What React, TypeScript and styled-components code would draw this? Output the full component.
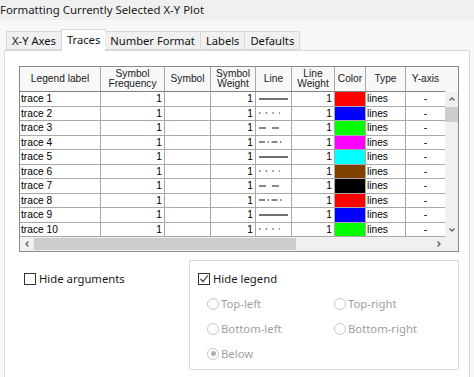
import * as React from 'react';
import styled, { createGlobalStyle } from 'styled-components';

const GlobalStyle = createGlobalStyle`
  html, body {
    margin: 0;
    padding: 0;
    background: #f0f0f0;
  }
  body {
    font-family: "Noto Sans", "Noto Sans CJK SC", sans-serif;
  }
`;

type LineKind = 'solid' | 'dot' | 'dash' | 'dashdot';

interface Trace {
  label: string;
  line: LineKind;
  color: string;
}

const traces: Trace[] = [
  { label: 'trace 1', line: 'solid', color: '#ff0000' },
  { label: 'trace 2', line: 'dot', color: '#0000ff' },
  { label: 'trace 3', line: 'dash', color: '#00ff00' },
  { label: 'trace 4', line: 'dashdot', color: '#ff00ff' },
  { label: 'trace 5', line: 'solid', color: '#00ffff' },
  { label: 'trace 6', line: 'dot', color: '#804000' },
  { label: 'trace 7', line: 'dash', color: '#000000' },
  { label: 'trace 8', line: 'dashdot', color: '#ff0000' },
  { label: 'trace 9', line: 'solid', color: '#0000ff' },
  { label: 'trace 10', line: 'dot', color: '#00ff00' }
];

const columns = '81px 64px 46px 45px 36px 43px 31px 40px 39px';

const tabs = ['X-Y Axes', 'Traces', 'Number Format', 'Labels', 'Defaults'];

// dash patterns roughly as the old Windows pen styles look at 1px
const dashes: Record<LineKind, string | undefined> = {
  solid: undefined,
  dot: '1.4 5.3',
  dash: '7 6',
  dashdot: '6 2.5 1.5 2.5'
};

const lineEnd: Record<LineKind, number> = {
  solid: 31,
  dot: 23,
  dash: 23,
  dashdot: 26
};

const LineSample = ({ kind }: { kind: LineKind }) => (
  <svg width="31" height="6" viewBox="0 0 31 6">
    <line
      x1="2"
      y1="3"
      x2={lineEnd[kind]}
      y2="3"
      stroke="#111"
      strokeWidth="1.2"
      strokeDasharray={dashes[kind]}
    />
  </svg>
);

const Chevron = ({ dir }: { dir: 'up' | 'down' | 'left' | 'right' }) => {
  const rot = { up: 0, right: 90, down: 180, left: 270 }[dir];
  return (
    <svg width="8" height="8" viewBox="0 0 8 8" style={{ transform: `rotate(${rot}deg)` }}>
      <polyline points="1.5,5.5 4,3 6.5,5.5" fill="none" stroke="#606060" strokeWidth="1.3" />
    </svg>
  );
};

const Check = () => (
  <svg width="10" height="10" viewBox="0 0 10 10">
    <polyline points="1.5,5 4,7.5 8.8,1.5" fill="none" stroke="#333" strokeWidth="1.2" />
  </svg>
);

export default function App() {
  return (
    <Window>
      <GlobalStyle />
      <Title>Formatting Currently Selected X-Y Plot</Title>
      <Body>
        <TabStrip>
          {tabs.map(t => (
            <Tab key={t} active={t === 'Traces'}>
              {t}
            </Tab>
          ))}
        </TabStrip>
        <Panel>
          <GridFrame>
            <HeaderRow>
              <HeadCell>Legend label</HeadCell>
              <HeadCell>
                Symbol
                <br />
                Frequency
              </HeadCell>
              <HeadCell>Symbol</HeadCell>
              <HeadCell>
                Symbol
                <br />
                Weight
              </HeadCell>
              <HeadCell>Line</HeadCell>
              <HeadCell>
                Line
                <br />
                Weight
              </HeadCell>
              <HeadCell>Color</HeadCell>
              <HeadCell>Type</HeadCell>
              <HeadCell>Y-axis</HeadCell>
              <HeadFiller />
            </HeaderRow>
            <GridBody>
              <Rows>
                {traces.map(tr => (
                  <Row key={tr.label}>
                    <Cell>{tr.label}</Cell>
                    <Cell align="right">1</Cell>
                    <Cell />
                    <Cell align="right">1</Cell>
                    <Cell>
                      <LineSample kind={tr.line} />
                    </Cell>
                    <Cell align="right">1</Cell>
                    <Swatch style={{ background: tr.color }} />
                    <Cell>lines</Cell>
                    <Cell align="center">-</Cell>
                  </Row>
                ))}
              </Rows>
              <VScroll>
                <ArrowBox>
                  <Chevron dir="up" />
                </ArrowBox>
                <VThumb />
                <Spacer />
                <ArrowBox>
                  <Chevron dir="down" />
                </ArrowBox>
              </VScroll>
            </GridBody>
            <HScrollRow>
              <HScroll>
                <ArrowBox>
                  <Chevron dir="left" />
                </ArrowBox>
                <HThumb />
                <Spacer />
                <ArrowBox>
                  <Chevron dir="right" />
                </ArrowBox>
              </HScroll>
              <Corner />
            </HScrollRow>
          </GridFrame>
          <Options>
            <LeftOptions>
              <CheckRow>
                <Box />
                Hide arguments
              </CheckRow>
            </LeftOptions>
            <GroupBox>
              <CheckRow>
                <Box>
                  <Check />
                </Box>
                Hide legend
              </CheckRow>
              <RadioGrid>
                <RadioRow>
                  <Radio />
                  Top-left
                </RadioRow>
                <RadioRow>
                  <Radio />
                  Top-right
                </RadioRow>
                <RadioRow>
                  <Radio />
                  Bottom-left
                </RadioRow>
                <RadioRow>
                  <Radio />
                  Bottom-right
                </RadioRow>
                <RadioRow>
                  <Radio selected />
                  Below
                </RadioRow>
              </RadioGrid>
            </GroupBox>
          </Options>
        </Panel>
      </Body>
    </Window>
  );
}

const Window = styled.div`
  width: 474px;
  height: 377px;
  overflow: hidden;
  background: #f0f0f0;
  display: flex;
  flex-direction: column;
`;

const Title = styled.div`
  height: 20px;
  line-height: 19px;
  font-size: 11.4px;
  color: #1a1a1a;
  white-space: nowrap;
`;

const Body = styled.div`
  flex: 1;
  background: #f7f7f7;
  padding-top: 9px;
  display: flex;
  flex-direction: column;
`;

const TabStrip = styled.div`
  display: flex;
  align-items: flex-end;
  padding-left: 6px;
  height: 21px;
  position: relative;
  z-index: 1;
`;

const Tab = styled.div<{ active?: boolean }>`
  height: ${p => (p.active ? '22px' : '19px')};
  box-sizing: border-box;
  padding: ${p => (p.active ? '1px' : '0')} 5px 0;
  margin: 0 ${p => (p.active ? '-1px' : '0')} ${p => (p.active ? '-1px' : '0')};
  font-size: 11.2px;
  line-height: 18px;
  color: #111;
  background: ${p => (p.active ? '#ffffff' : '#f0f0f0')};
  border: 1px solid #d9d9d9;
  border-bottom: ${p => (p.active ? 'none' : '1px solid #d9d9d9')};
  border-left: ${p => (p.active ? '1px solid #d9d9d9' : 'none')};
  white-space: nowrap;

  &:first-child {
    border-left: 1px solid #d9d9d9;
  }
`;

const Panel = styled.div`
  flex: 1;
  margin-left: 4px;
  width: 466px;
  box-sizing: border-box;
  background: #ffffff;
  border: 1px solid #d9d9d9;
  border-bottom: none;
  padding: 15px 0 0 14px;
`;

const GridFrame = styled.div`
  width: 440px;
  box-sizing: border-box;
  border: 1px solid #8a8a8a;
  font-family: "Liberation Sans", Arial, sans-serif;
  font-size: 10.2px;
  color: #000;
`;

const HeaderRow = styled.div`
  display: grid;
  grid-template-columns: ${columns} 13px;
  height: 25px;
`;

const HeadCell = styled.div`
  box-sizing: border-box;
  border-right: 1px solid #a9a9a9;
  border-bottom: 1px solid #808080;
  background: #f8f8f8;
  display: flex;
  align-items: center;
  justify-content: center;
  text-align: center;
  line-height: 10px;
  color: #202020;

  &:nth-child(9) {
    border-right: none;
  }
`;

const HeadFiller = styled.div`
  background: #f8f8f8;
`;

const GridBody = styled.div`
  display: flex;
`;

const Rows = styled.div`
  width: 425px;
`;

const Row = styled.div`
  display: grid;
  grid-template-columns: ${columns};
  height: 14.5px;
`;

const Cell = styled.div<{ align?: 'left' | 'right' | 'center' }>`
  box-sizing: border-box;
  border-right: 1px solid #a9a9a9;
  border-bottom: 1px solid #a9a9a9;
  padding: 0 ${p => (p.align === 'right' ? '2px' : '1px')};
  display: flex;
  align-items: center;
  justify-content: ${p =>
    p.align === 'right' ? 'flex-end' : p.align === 'center' ? 'center' : 'flex-start'};
  white-space: nowrap;
  overflow: hidden;
  line-height: 13px;

  &:nth-child(9) {
    border-right: none;
  }
`;

const Swatch = styled.div`
  box-sizing: border-box;
  border-right: 1px solid #a9a9a9;
  border-bottom: 1px solid #a9a9a9;
`;

const VScroll = styled.div`
  width: 13px;
  background: #f0f0f0;
  display: flex;
  flex-direction: column;
`;

const ArrowBox = styled.div`
  width: 13px;
  height: 14px;
  display: flex;
  align-items: center;
  justify-content: center;
  flex: none;
`;

const VThumb = styled.div`
  height: 15px;
  margin: 1px 0;
  background: #cdcdcd;
`;

const HThumb = styled.div`
  width: 262px;
  height: 12px;
  margin: 0 1px;
  background: #cdcdcd;
  align-self: center;
`;

const Spacer = styled.div`
  flex: 1;
`;

const HScrollRow = styled.div`
  display: flex;
  height: 14px;
`;

const HScroll = styled.div`
  width: 425px;
  display: flex;
  background: #f0f0f0;
`;

const Corner = styled.div`
  flex: 1;
  background: #f0f0f0;
`;

const Options = styled.div`
  display: flex;
  margin-top: 8px;
  font-size: 11.3px;
  color: #1a1a1a;
`;

const LeftOptions = styled.div`
  width: 170px;
  padding: 11px 0 0 5px;
  box-sizing: border-box;
`;

const GroupBox = styled.div`
  width: 270px;
  height: 110px;
  box-sizing: border-box;
  border: 1px solid #dcdcdc;
  padding: 10px 0 0 8px;
`;

const CheckRow = styled.div`
  display: flex;
  align-items: center;
  gap: 3px;
  height: 15px;
  white-space: nowrap;
`;

const Box = styled.div`
  width: 12px;
  height: 12px;
  box-sizing: border-box;
  border: 1px solid #333;
  background: #fff;
  display: flex;
  align-items: center;
  justify-content: center;
`;

const RadioGrid = styled.div`
  display: grid;
  grid-template-columns: 127px 1fr;
  row-gap: 10px;
  margin-top: 10px;
  padding-left: 9px;
`;

const RadioRow = styled.div`
  display: flex;
  align-items: center;
  gap: 2px;
  height: 15px;
  color: #a0a0a0;
  white-space: nowrap;
`;

const Radio = styled.div<{ selected?: boolean }>`
  width: 12px;
  height: 12px;
  box-sizing: border-box;
  border-radius: 50%;
  border: 1px solid #c8c8c8;
  background: #fff;
  position: relative;

  &::after {
    content: '';
    display: ${p => (p.selected ? 'block' : 'none')};
    position: absolute;
    left: 2.5px;
    top: 2.5px;
    width: 5px;
    height: 5px;
    border-radius: 50%;
    background: #b0b0b0;
  }
`;
